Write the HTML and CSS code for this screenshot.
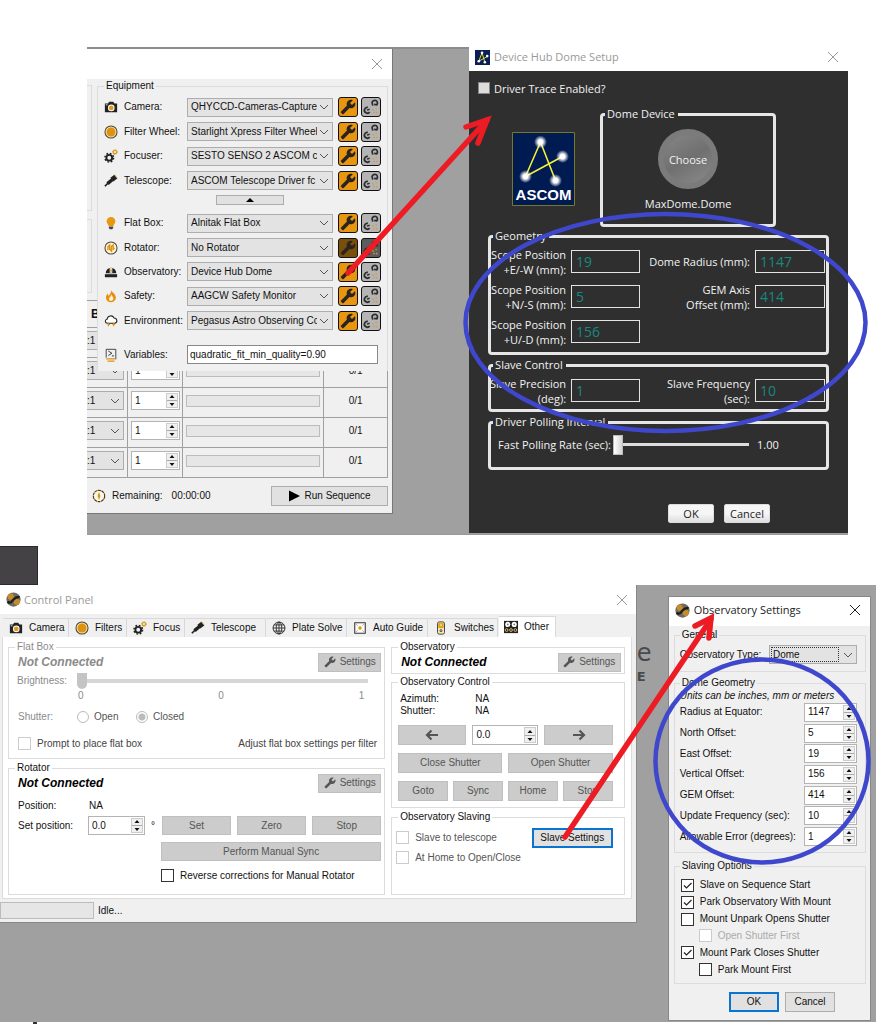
FILE: index.html
```html
<!DOCTYPE html>
<html lang="en">
<head>
<meta charset="utf-8">
<title>Observatory setup</title>
<link rel="stylesheet" href="styles.css">
</head>
<body>
<svg class="sprite" aria-hidden="true">
  <symbol id="i-wrench" viewBox="0 0 24 24"><path transform="translate(24 0) scale(-1 1)" d="M22.7 19l-9.1-9.1c.9-2.3.4-5-1.5-6.9-2-2-5-2.4-7.4-1.3L9 6 6 9 1.6 4.7C.4 7.1.9 10.1 2.9 12.1c1.9 1.9 4.6 2.4 6.9 1.5l9.1 9.1c.4.4 1 .4 1.4 0l2.3-2.3c.5-.4.5-1.1.1-1.4z"/></symbol>
  <symbol id="i-link" viewBox="0 0 20 20"><g fill="none" stroke="#2b2b2b" stroke-width="1.900"><path d="M6.500 10.500A3.200 3.200 0 1 0 8.500 15.500"/><path d="M12 8.500L11.200 5.200A3 3 0 1 1 16.500 7.500L13.500 7"/><path d="M5.500 13.500l3-1" stroke-width="1.500"/></g><path d="M11.500 12.500l1.500 1.500M15.500 11l.5 1.500M12.500 16.500l1.500-.5M15.500 15.500l1.500 1.500" stroke="#d69a3c" stroke-width="1.300"/></symbol>
  <symbol id="i-camera" viewBox="0 0 16 16"><path d="M1 4h3.500l1.500-2h4.500l1.500 2H15v10H1z" fill="#222"/><circle cx="8.300" cy="9" r="3.800" fill="#fff"/><circle cx="8.300" cy="9" r="2.700" fill="#e09a1a"/><path d="M2 5.500h2" stroke="#fff"/></symbol>
  <symbol id="i-disc" viewBox="0 0 16 16"><circle cx="8" cy="8" r="6.900" fill="#f7dfb0" stroke="#4c4636" stroke-width="1.200"/><circle cx="8" cy="8" r="5.100" fill="#dd930f"/></symbol>
  <symbol id="i-gears" viewBox="0 0 16 16"><circle cx="6" cy="10" r="3.300" fill="none" stroke="#222" stroke-width="2.200"/><circle cx="6" cy="10" r="5" fill="none" stroke="#222" stroke-width="1.600" stroke-dasharray="2 1.930"/><circle cx="12.500" cy="3.500" r="1.900" fill="none" stroke="#dd930f" stroke-width="1.200"/><circle cx="12.500" cy="3.500" r="2.800" fill="none" stroke="#dd930f" stroke-dasharray="1.200 1"/></symbol>
  <symbol id="i-scope" viewBox="0 0 16 16"><path d="M1 14l4-4" stroke="#222" stroke-width="2"/><path d="M4 11l6-5" stroke="#222" stroke-width="4"/><path d="M9 6.500L13.500 3" stroke="#222" stroke-width="5.500"/><path d="M12 .8l3 4" stroke="#dd930f" stroke-width="1"/></symbol>
  <symbol id="i-bulb" viewBox="0 0 16 16"><path d="M8 1a5 5 0 0 0-5 5c0 2 1.500 3 2.300 5.300h5.400C11.500 9 13 8 13 6a5 5 0 0 0-5-5z" fill="#e8980e"/><path d="M5.500 12h5v1.500L9.500 15h-3l-1-1.500z" fill="#444"/></symbol>
  <symbol id="i-rot" viewBox="0 0 16 16"><circle cx="8" cy="8" r="6.900" fill="#fff4dd" stroke="#4c4636" stroke-width="1.200"/><path d="M4.500 10.500V6.500l2-2v5l2 2V6l2-1.500v5l1.500-1.500" fill="none" stroke="#dd930f" stroke-width="1.600"/></symbol>
  <symbol id="i-dome" viewBox="0 0 16 16"><path d="M2 9.500a6 6.500 0 0 1 12 0z" fill="#222"/><path d="M6.500 3.500h3V9h-3z" fill="#e8e0d0"/><circle cx="8" cy="6.500" r="1" fill="#dd930f"/><path d="M1 10.500h14V14H1z" fill="#222"/></symbol>
  <symbol id="i-fire" viewBox="0 0 16 16"><path d="M8 .8c.5 3 4.500 3.500 5.500 8 .5 3.500-2 6.200-5.500 6.200S2 12.500 2.300 9c.2-2 1.200-2.800 1.700-4 1 1 1 2 1 3C7 6 8.500 4 8 .8z" fill="#e8900e"/><path d="M8.500 6c0 2 2.700 3 2.200 5.500-.3 1.500-1.500 2-2.700 2s-2.500-.8-2.300-2.500C6 9.500 8 9 8.500 6z" fill="#fff1d8"/></symbol>
  <symbol id="i-cloud" viewBox="0 0 16 16"><path d="M4 10.500C1 10.500.5 6.500 3.500 6 4 2 9.500.5 11.500 4.500c3.500 0 4.500 5 1 6z" fill="#fff" stroke="#222" stroke-width="1.200"/><path d="M5 10v4M11 10v4M4 12h3M9.500 12h3" stroke="#dd930f" stroke-width="1.300"/></symbol>
  <symbol id="i-script" viewBox="0 0 16 16"><path d="M2.500 11V1.500h11V13" fill="none" stroke="#333"/><path d="M5 3.500l4 2.500-4 2.500M9 9h2.500" fill="none" stroke="#222"/><path d="M2.500 12.500h10M4 15h8" stroke="#dd930f" stroke-width="1.400"/></symbol>
  <symbol id="i-clock" viewBox="0 0 16 16"><circle cx="8" cy="8" r="6.500" fill="#fff7e6" stroke="#4c3b20" stroke-width="1.300" stroke-dasharray="3.500 .6"/><path d="M8 3.500l1.600 4.500L8 12.500 6.400 8z" fill="#dd930f"/></symbol>
  <symbol id="i-globe" viewBox="0 0 16 16"><g fill="none" stroke="#333" stroke-width="1.100"><circle cx="8" cy="8" r="6.800"/><ellipse cx="8" cy="8" rx="3.200" ry="6.800"/><path d="M8 1v14M1 8h14M2.200 4.500h11.600M2.200 11.500h11.600"/></g></symbol>
  <symbol id="i-guide" viewBox="0 0 16 16"><path d="M2 2h12v12H2z" fill="#fffdf5" stroke="#333" stroke-width="1.200"/><path d="M4 4l1 1M12 4l-1 1M4 12l1-1M12 12l-1-1" stroke="#555"/><circle cx="8" cy="8" r="1.900" fill="#dd930f"/></symbol>
  <symbol id="i-switch" viewBox="0 0 16 16"><rect x="4" y="1" width="8" height="14" rx="2" fill="#f7e6b8" stroke="#333"/><path d="M5 2h6v6H5z" fill="#e0a010"/><path d="M8 3v3" stroke="#fff"/><circle cx="8" cy="11" r="1.200" fill="none" stroke="#333"/></symbol>
  <symbol id="i-other" viewBox="0 0 16 16"><path d="M0 1h16v14H0z" fill="#222"/><circle cx="4.300" cy="5" r="2.900" fill="#fff"/><circle cx="11.700" cy="5" r="2.900" fill="#fff"/><circle cx="4.300" cy="5" r="1" fill="#777"/><circle cx="11.700" cy="5" r="1" fill="#777"/><g fill="#222" stroke="#e9c876"><circle cx="3" cy="11.500" r="1.600"/><circle cx="8" cy="11.500" r="1.600"/><circle cx="13" cy="11.500" r="1.600"/></g></symbol>
  <symbol id="i-sgp" viewBox="0 0 16 16"><circle cx="8" cy="8" r="7.600" fill="#6e6a63"/><circle cx="5" cy="5" r="3.300" fill="#c58c28"/><circle cx="11.500" cy="10.500" r="3.300" fill="#c58c28"/><path d="M1.500 10.500c4 2.500 4.500-.5 6.500-2.500s4-3 6.500-2.500" fill="none" stroke="#1d1d1d" stroke-width="2.600"/></symbol>
  <symbol id="i-x" viewBox="0 0 12 12"><path d="M1 1l10 10M11 1L1 11" fill="none" stroke="currentColor"/></symbol>
  <symbol id="i-left" viewBox="0 0 14 12"><path d="M13 6H2M6.500 1.500L2 6l4.500 4.500" fill="none" stroke="currentColor" stroke-width="2.200"/></symbol>
  <symbol id="i-right" viewBox="0 0 14 12"><path d="M1 6h11M7.500 1.500L12 6l-4.500 4.500" fill="none" stroke="currentColor" stroke-width="2.200"/></symbol>
</svg>

<main class="page">
  <section class="shot shot-top">
    <div class="win seq">
      <div class="titlebar seq-title"><button class="close" aria-label="Close"><svg><use href="#i-x"/></svg></button></div>
      <div class="seq-body">
        <div class="behind"><i class="stub stub-a"></i><i class="stub stub-b"></i></div>
        <table class="events">
          <thead><tr><th>B</th><th></th><th></th><th></th></tr></thead>
          <tbody>
            <tr><td><select class="bin" aria-label="Binning"><option>:1</option></select></td><td><span class="spin"><input value="1" aria-label="Repeat"><i></i></span></td><td><div class="bar"></div></td><td>0/1</td></tr>
            <tr><td><select class="bin" aria-label="Binning"><option>:1</option></select></td><td><span class="spin"><input value="1" aria-label="Repeat"><i></i></span></td><td><div class="bar"></div></td><td>0/1</td></tr>
            <tr><td><select class="bin" aria-label="Binning"><option>:1</option></select></td><td><span class="spin"><input value="1" aria-label="Repeat"><i></i></span></td><td><div class="bar"></div></td><td>0/1</td></tr>
            <tr><td><select class="bin" aria-label="Binning"><option>:1</option></select></td><td><span class="spin"><input value="1" aria-label="Repeat"><i></i></span></td><td><div class="bar"></div></td><td>0/1</td></tr>
            <tr><td><select class="bin" aria-label="Binning"><option>:1</option></select></td><td><span class="spin"><input value="1" aria-label="Repeat"><i></i></span></td><td><div class="bar"></div></td><td>0/1</td></tr>
          </tbody>
        </table>
        <div class="seq-foot"><svg class="ic"><use href="#i-clock"/></svg><span class="remain">Remaining:</span><span>00:00:00</span><button class="btn run"><svg viewBox="0 0 10 10"><path d="M0 0l10 5-10 5z"/></svg>Run Sequence</button></div>

        <div class="equip">
          <fieldset>
            <legend>Equipment</legend>
            <div class="devs devs-main">
              <div class="dev"><svg class="ic"><use href="#i-camera"/></svg><label for="d1">Camera:</label><select id="d1"><option>QHYCCD-Cameras-Capture</option></select><button class="sq" aria-label="Settings"><svg><use href="#i-wrench"/></svg></button><button class="sq link" aria-label="Connect"><svg><use href="#i-link"/></svg></button></div>
              <div class="dev"><svg class="ic"><use href="#i-disc"/></svg><label for="d2">Filter Wheel:</label><select id="d2"><option>Starlight Xpress Filter Wheel</option></select><button class="sq" aria-label="Settings"><svg><use href="#i-wrench"/></svg></button><button class="sq link" aria-label="Connect"><svg><use href="#i-link"/></svg></button></div>
              <div class="dev"><svg class="ic"><use href="#i-gears"/></svg><label for="d3">Focuser:</label><select id="d3"><option>SESTO SENSO 2 ASCOM c</option></select><button class="sq" aria-label="Settings"><svg><use href="#i-wrench"/></svg></button><button class="sq link" aria-label="Connect"><svg><use href="#i-link"/></svg></button></div>
              <div class="dev"><svg class="ic"><use href="#i-scope"/></svg><label for="d4">Telescope:</label><select id="d4"><option>ASCOM Telescope Driver fc</option></select><button class="sq" aria-label="Settings"><svg><use href="#i-wrench"/></svg></button><button class="sq link" aria-label="Connect"><svg><use href="#i-link"/></svg></button></div>
            </div>
            <button class="btn fold" aria-label="Collapse"><svg viewBox="0 0 8 4"><path d="M0 4l4-4 4 4z"/></svg></button>
            <div class="devs devs-more">
              <div class="dev"><svg class="ic"><use href="#i-bulb"/></svg><label for="d5">Flat Box:</label><select id="d5"><option>Alnitak Flat Box</option></select><button class="sq" aria-label="Settings"><svg><use href="#i-wrench"/></svg></button><button class="sq link" aria-label="Connect"><svg><use href="#i-link"/></svg></button></div>
              <div class="dev off"><svg class="ic"><use href="#i-rot"/></svg><label for="d6">Rotator:</label><select id="d6"><option>No Rotator</option></select><button class="sq" aria-label="Settings"><svg><use href="#i-wrench"/></svg></button><button class="sq link" aria-label="Connect"><svg><use href="#i-link"/></svg></button></div>
              <div class="dev"><svg class="ic"><use href="#i-dome"/></svg><label for="d7">Observatory:</label><select id="d7"><option>Device Hub Dome</option></select><button class="sq" aria-label="Settings"><svg><use href="#i-wrench"/></svg></button><button class="sq link" aria-label="Connect"><svg><use href="#i-link"/></svg></button></div>
              <div class="dev"><svg class="ic"><use href="#i-fire"/></svg><label for="d8">Safety:</label><select id="d8"><option>AAGCW Safety Monitor</option></select><button class="sq" aria-label="Settings"><svg><use href="#i-wrench"/></svg></button><button class="sq link" aria-label="Connect"><svg><use href="#i-link"/></svg></button></div>
              <div class="dev"><svg class="ic"><use href="#i-cloud"/></svg><label for="d9">Environment:</label><select id="d9"><option>Pegasus Astro Observing Cc</option></select><button class="sq" aria-label="Settings"><svg><use href="#i-wrench"/></svg></button><button class="sq link" aria-label="Connect"><svg><use href="#i-link"/></svg></button></div>
            </div>
            <div class="dev vars"><svg class="ic"><use href="#i-script"/></svg><label for="vars">Variables:</label><input id="vars" value="quadratic_fit_min_quality=0.90"></div>
          </fieldset>
        </div>
      </div>
    </div>

    <div class="hub">
      <div class="titlebar hub-title"><svg class="hub-ic" viewBox="0 0 16 16"><path fill="#0a1f55" d="M0 0h16v16H0z"/><path d="M4 12l3.500-9 3 10M4 12l9-5" fill="none" stroke="#e6e23c"/><g fill="#fff"><circle cx="4" cy="12" r="1.400"/><circle cx="7.500" cy="3" r="1.400"/><circle cx="10.500" cy="13" r="1.400"/><circle cx="13" cy="6.500" r="1.400"/></g></svg><span>Device Hub Dome Setup</span><button class="close" aria-label="Close"><svg><use href="#i-x"/></svg></button></div>
      <div class="hub-body">
        <label class="trace"><input type="checkbox">Driver Trace Enabled?</label>
        <div class="hub-top">
          <svg class="ascom" viewBox="0 0 63 74"><defs><radialGradient id="glow"><stop offset=".35" stop-color="#fff"/><stop offset="1" stop-color="#fff" stop-opacity="0"/></radialGradient></defs><path d="M.5.5h62v73H.500z" fill="#001a52" stroke="#77782a"/><path d="M13.500 44.500L28.500 10l15 38.500M13.500 44.500L50.500 24.500" fill="none" stroke="#f4ef3a" stroke-width="1.600"/><g fill="url(#glow)"><circle cx="28.500" cy="10" r="6.500"/><circle cx="50.500" cy="24.500" r="6.500"/><circle cx="13.500" cy="44.500" r="6.500"/><circle cx="43.500" cy="48.500" r="6.500"/></g><text x="31.500" y="68" text-anchor="middle">ASCOM</text></svg>
          <fieldset class="wg device"><legend>Dome Device</legend><button class="choose">Choose</button><div>MaxDome.Dome</div></fieldset>
        </div>
        <fieldset class="wg geo"><legend>Geometry</legend>
          <div class="pair"><label for="g1">Scope Position<br>+E/-W (mm):</label><input id="g1" value="19"><label for="g2">Dome Radius (mm):</label><input id="g2" value="1147"></div>
          <div class="pair"><label for="g3">Scope Position<br>+N/-S (mm):</label><input id="g3" value="5"><label for="g4">GEM Axis<br>Offset (mm):</label><input id="g4" value="414"></div>
          <div class="pair"><label for="g5">Scope Position<br>+U/-D (mm):</label><input id="g5" value="156"></div>
        </fieldset>
        <fieldset class="wg slavec"><legend>Slave Control</legend>
          <div class="pair"><label for="g6">Slave Precision<br>(deg):</label><input id="g6" value="1"><label for="g7">Slave Frequency<br>(sec):</label><input id="g7" value="10"></div>
        </fieldset>
        <fieldset class="wg poll"><legend>Driver Polling Interval</legend>
          <div class="rate"><label for="rate">Fast Polling Rate (sec):</label><input type="range" id="rate" min="0" max="10" value="0"><span>1.00</span></div>
        </fieldset>
        <div class="hub-actions"><button>OK</button><button>Cancel</button></div>
      </div>
    </div>
  </section>

  <div class="swatch"></div>

  <section class="shot shot-bottom">
    <div class="win panel">
      <div class="titlebar cp-title"><svg class="app"><use href="#i-sgp"/></svg><span>Control Panel</span><button class="close" aria-label="Close"><svg><use href="#i-x"/></svg></button></div>
      <nav class="tabs">
        <button class="t1"><svg class="ic"><use href="#i-camera"/></svg>Camera</button>
        <button class="t2"><svg class="ic"><use href="#i-disc"/></svg>Filters</button>
        <button class="t2"><svg class="ic"><use href="#i-gears"/></svg>Focus</button>
        <button class="t3"><svg class="ic"><use href="#i-scope"/></svg>Telescope</button>
        <button class="t3"><svg class="ic"><use href="#i-globe"/></svg>Plate Solve</button>
        <button class="t3"><svg class="ic"><use href="#i-guide"/></svg>Auto Guide</button>
        <button class="t-sw"><svg class="ic"><use href="#i-switch"/></svg>Switches</button>
        <button class="t2 on"><svg class="ic"><use href="#i-other"/></svg>Other</button>
      </nav>
      <div class="tabpage">
        <div class="col">
          <fieldset class="flat"><legend>Flat Box</legend>
            <div class="head"><strong>Not Connected</strong><button class="btn dis set"><svg><use href="#i-wrench"/></svg>Settings</button></div>
            <div class="bright"><label for="br">Brightness:</label><input type="range" id="br" min="0" max="1" value="0" disabled></div>
            <div class="ticks"><span>0</span><span>0</span><span>1</span></div>
            <div class="shutter"><span>Shutter:</span><label><input type="radio" name="sh" disabled>Open</label><label><input type="radio" name="sh" checked disabled>Closed</label></div>
            <div class="prompt"><label class="ck"><input type="checkbox" disabled>Prompt to place flat box</label><span>Adjust flat box settings per filter</span></div>
          </fieldset>
          <fieldset class="rot"><legend>Rotator</legend>
            <div class="head"><strong>Not Connected</strong><button class="btn dis set"><svg><use href="#i-wrench"/></svg>Settings</button></div>
            <div class="pos"><span>Position:</span><span>NA</span></div>
            <div class="setpos"><label for="sp">Set position:</label><span class="spin"><input id="sp" value="0.0"><i></i></span><span class="deg">°</span><button class="btn dis">Set</button><button class="btn dis">Zero</button><button class="btn dis">Stop</button></div>
            <div class="under"><button class="btn dis">Perform Manual Sync</button><label class="ck"><input type="checkbox">Reverse corrections for Manual Rotator</label></div>
          </fieldset>
        </div>
        <div class="col">
          <fieldset class="obs"><legend>Observatory</legend>
            <div class="head"><strong>Not Connected</strong><button class="btn dis set"><svg><use href="#i-wrench"/></svg>Settings</button></div>
          </fieldset>
          <fieldset class="ctl"><legend>Observatory Control</legend>
            <div class="stat"><span>Azimuth:</span><span>NA</span><span>Shutter:</span><span>NA</span></div>
            <div class="moves">
              <div class="three"><button class="btn dis" aria-label="Left"><svg><use href="#i-left"/></svg></button><span class="spin"><input value="0.0" aria-label="Step"><i></i></span><button class="btn dis" aria-label="Right"><svg><use href="#i-right"/></svg></button></div>
              <div class="two"><button class="btn dis">Close Shutter</button><button class="btn dis">Open Shutter</button></div>
              <div class="four"><button class="btn dis">Goto</button><button class="btn dis">Sync</button><button class="btn dis">Home</button><button class="btn dis">Stop</button></div>
            </div>
          </fieldset>
          <fieldset class="slaving"><legend>Observatory Slaving</legend>
            <div class="slaving-row">
              <div class="checks"><label class="ck"><input type="checkbox" disabled>Slave to telescope</label><label class="ck"><input type="checkbox" disabled>At Home to Open/Close</label></div>
              <button class="btn focus">Slave Settings</button>
            </div>
          </fieldset>
        </div>
      </div>
      <div class="status"><div class="bar"></div><span>Idle...</span></div>
    </div>

    <div class="wall"><span class="w1">e</span><span class="w2">E</span></div>

    <div class="win dlg">
      <div class="titlebar dlg-title"><svg class="app"><use href="#i-sgp"/></svg><span>Observatory Settings</span><button class="close" aria-label="Close"><svg><use href="#i-x"/></svg></button></div>
      <div class="dlg-body">
        <fieldset class="general"><legend>General</legend><div class="type"><label for="ot">Observatory Type:</label><span class="pick"><select id="ot"><option>Dome</option></select></span></div></fieldset>
        <fieldset class="dgeo"><legend>Dome Geometry</legend>
          <em>Units can be inches, mm or meters</em>
          <div class="nums">
            <div><label for="n1">Radius at Equator:</label><span class="spin"><input id="n1" value="1147"><i></i></span></div>
            <div><label for="n2">North Offset:</label><span class="spin"><input id="n2" value="5"><i></i></span></div>
            <div><label for="n3">East Offset:</label><span class="spin"><input id="n3" value="19"><i></i></span></div>
            <div><label for="n4">Vertical Offset:</label><span class="spin"><input id="n4" value="156"><i></i></span></div>
            <div><label for="n5">GEM Offset:</label><span class="spin"><input id="n5" value="414"><i></i></span></div>
            <div><label for="n6">Update Frequency (sec):</label><span class="spin"><input id="n6" value="10"><i></i></span></div>
            <div><label for="n7">Allowable Error (degrees):</label><span class="spin"><input id="n7" value="1"><i></i></span></div>
          </div>
        </fieldset>
        <fieldset class="sopt"><legend>Slaving Options</legend>
          <div class="opts">
            <label class="ck"><input type="checkbox" checked>Slave on Sequence Start</label>
            <label class="ck"><input type="checkbox" checked>Park Observatory With Mount</label>
            <label class="ck"><input type="checkbox">Mount Unpark Opens Shutter</label>
            <label class="ck sub"><input type="checkbox" disabled>Open Shutter First</label>
            <label class="ck"><input type="checkbox" checked>Mount Park Closes Shutter</label>
            <label class="ck sub"><input type="checkbox">Park Mount First</label>
          </div>
        </fieldset>
        <div class="dlg-actions"><button class="btn focus">OK</button><button class="btn">Cancel</button></div>
      </div>
    </div>
  </section>
  <div class="edge"></div>

  <svg class="marks" viewBox="0 0 876 1024" aria-hidden="true">
    <g fill="none" stroke="#3f48cc" stroke-width="4.500"><ellipse cx="665.500" cy="322.500" rx="200" ry="108.500"/><ellipse cx="762" cy="761" rx="106.500" ry="101.500"/></g>
    <g fill="none" stroke="#ed1c24" stroke-width="5.500" stroke-linecap="round"><path d="M348 273L487 120"/><path d="M466 127L487 120L478 143"/><path d="M565 837L711 619"/><path d="M695 626L711 618L709 638"/></g>
  </svg>
</main>
</body>
</html>
```
FILE: styles.css
```css
:root {
  --ui: "Liberation Sans", Arial, sans-serif;
  --seg: "Open Sans", sans-serif;
  --chev: url("data:image/svg+xml,%3Csvg xmlns='http://www.w3.org/2000/svg' width='10' height='6'%3E%3Cpath d='M1 1l4 4 4-4' fill='none' stroke='%23555'/%3E%3C/svg%3E");
  --tick: url("data:image/svg+xml,%3Csvg xmlns='http://www.w3.org/2000/svg' width='11' height='11'%3E%3Cpath d='M2 5.500l2.500 2.500L9.500 3' fill='none' stroke='%23222' stroke-width='1.200'/%3E%3C/svg%3E");
  --arrows: url("data:image/svg+xml,%3Csvg xmlns='http://www.w3.org/2000/svg' width='12' height='15'%3E%3Cpath d='M3.500 5L6 2l2.500 3zM3.500 10h5L6 13z' fill='%23111'/%3E%3Cpath d='M0 7.500h12' stroke='%23aaa'/%3E%3C/svg%3E");
}
* { box-sizing: border-box; }
body { margin: 0; background: #fff; color: #111; font: 10px/12px var(--ui); }
button, input, select { font: inherit; color: inherit; margin: 0; padding: 0; border-radius: 0; min-width: 0; }
select { appearance: none; height: 19px; border: 1px solid #adadad; background: #e3e3e3 var(--chev) no-repeat right 3px center; padding: 0 15px 0 3px; overflow: hidden; white-space: nowrap; text-overflow: clip; }
fieldset { margin: 0; padding: 0; border: 1px solid #dcdcdc; min-width: 0; }
legend { padding: 0 2px; margin-left: 6px; line-height: 12px; }
.sprite { position: absolute; width: 0; height: 0; }
.page { position: relative; padding-top: 47px; }
.marks { position: absolute; left: 0; top: 0; width: 876px; height: 1024px; pointer-events: none; }
.ic { width: 14px; height: 14px; flex: none; }
.titlebar { display: flex; align-items: center; background: #fff; font: 11px/16px var(--seg); color: #999; }
.close { margin-left: auto; border: 0; background: none; color: #999; display: flex; }
.close svg { width: 12px; height: 12px; }
.btn { border: 1px solid #adadad; background: #e1e1e1; display: flex; align-items: center; justify-content: center; white-space: nowrap; }
.btn.dis { background: #ccc; border-color: #bfbfbf; color: #555; }
.btn.focus { border: 2px solid #0a74d0; }
.spin { display: flex; height: 19px; border: 1px solid #b4b4b4; background: #fff; padding: 1px; }
.spin input { flex: 1; width: 0; border: 0; padding-left: 2px; background: none; }
.spin i { flex: none; width: 12px; background: #f0f0f0 var(--arrows) no-repeat center; outline: 1px solid #ccc; outline-offset: -1px; }
.bar { border: 1px solid #bcbcbc; background: #e6e6e6; }
.ck { display: flex; align-items: center; gap: 6px; white-space: nowrap; }
.ck input { appearance: none; flex: none; width: 13px; height: 13px; border: 1px solid #333; background: #fff; }
.ck input:checked { background: #fff var(--tick) no-repeat center; }
.ck input:disabled { border-color: #ccc; }

/* sequence window and dome setup dialog */
.shot { display: flex; background: #a0a0a0; }
.shot-top { margin: 0 28px 0 87px; padding-top: 2px; border-bottom: 1px solid #999; min-height: 488px; background: linear-gradient(#8c8c8c 2px, #a0a0a0 2px); }
.seq { flex: 306 1 0; margin-right: 76px; align-self: flex-start; border-right: 1px solid #777; border-bottom: 1px solid #777; background: #f0f0f0; min-width: 0; }
.seq-title { height: 30px; padding-right: 9px; }
.seq-body { position: relative; padding-right: 4px; }
.behind { height: 221px; padding-top: 6px; }
.stub { display: block; width: 5px; border: 1px solid #dcdcdc; border-left: 0; }
.stub-a { height: 126px; margin-bottom: 8px; }
.stub-b { height: 74px; }
.events { width: 100%; border-collapse: separate; border-spacing: 0; table-layout: fixed; border-top: 1px solid #a0a0a0; }
.events th { height: 27px; border-bottom: 1px solid #a0a0a0; text-align: left; padding-left: 4px; font: bold 12px/12px var(--ui); }
.events th:nth-child(1) { width: 41px; }
.events th:nth-child(2) { width: 55px; }
.events th:nth-child(4) { width: 64px; }
.events td { height: 30px; padding: 0 3px 4px; border-right: 1px solid #a0a0a0; border-bottom: 1px solid #a0a0a0; text-align: center; vertical-align: middle; }
.events td:first-child { padding-left: 0; }
.events .bin { display: block; width: 100%; border-left: 0; padding-left: 0; }
.events .spin { text-align: left; width: 49px; }
.events .bar { height: 12px; }
.seq-foot { display: flex; align-items: center; height: 35px; padding-left: 5px; }
.remain { margin: 0 9px 0 6px; }
.run { margin-left: auto; width: 117px; height: 20px; gap: 5px; }
.run svg { width: 11px; height: 12px; }
.equip { position: absolute; left: 10px; right: 2px; top: 0; height: 292px; background: #f0f0f0; overflow: hidden; }
.equip fieldset { margin-right: 2px; padding: 0 6px 10px; }
.equip legend { margin-left: 0; line-height: 14px; }
.devs { display: grid; grid-template-columns: minmax(0, 1fr); grid-auto-rows: 1fr; align-items: center; }
.devs-main { min-height: 98px; margin-top: 2px; }
.devs-more { min-height: 122px; margin-top: 6px; }
.dev { display: flex; align-items: center; }
.dev label { width: 63px; margin-left: 6px; flex: none; }
.dev select { flex: 1; width: 0; margin-right: 5px; }
.dev input { flex: 1; width: 0; height: 19px; border: 1px solid #888; background: #fff; padding-left: 2px; margin-right: 3px; }
.vars { margin-top: 12px; }
.sq { width: 20px; height: 20px; border: 1px solid #111; border-radius: 3px; background: #e8960f; display: flex; align-items: center; justify-content: center; flex: none; }
.sq svg { width: 16px; height: 16px; fill: #2a2420; }
.sq.link { background: #b4b4b4; margin-left: 3px; }
.sq.link svg { width: 18px; height: 18px; }
.off .sq { background: #7a4f0a; }
.off .sq.link { background: #5c5c5c; }
.fold { width: 68px; height: 10px; margin: 2px auto 0 112px; }
.fold svg { width: 8px; height: 4px; }

.hub { flex: 380 1 0; min-width: 0; margin-top: -2px; margin-bottom: 1px; display: flex; flex-direction: column; font: 11px/15px var(--seg); color: #f2f2f2; }
.hub-title { height: 24px; padding: 0 9px 4px 6px; gap: 4px; }
.hub-ic { width: 15px; height: 15px; }
.hub-body { flex: 1; background: #2f2f2f; padding: 9px 19px 0; }
.trace { display: flex; align-items: center; gap: 4px; height: 16px; margin-left: -10px; }
.trace input { appearance: none; width: 12px; height: 12px; border: 1px solid #888; background: #ddd; }
.hub-top { display: flex; margin-top: 10px; }
.ascom { width: 63px; height: 74px; margin: 26px 25px 0 24px; }
.ascom text { font: bold 15px "Liberation Sans", sans-serif; fill: #fff; }
.wg { border: 3px solid #e6e6e6; border-radius: 4px; background: none; }
.wg legend { line-height: 16px; margin-left: 2px; padding: 0 3px 0 2px; }
.device { width: 176px; height: 121px; text-align: center; }
.device legend { text-align: left; }
.choose { display: block; width: 60px; height: 60px; margin: 7px auto; border: 6px solid #7b7b7b; border-radius: 50%; background: linear-gradient(150deg, #868686, #707070 50%, #8a8a8a); white-space: nowrap; padding: 0; line-height: 15px; }
.geo { margin-top: 1px; padding: 0 0 3px; }
.pair { display: grid; grid-template-columns: 75px 69px 1fr 70px; column-gap: 5px; align-items: center; height: 35px; margin-right: 1px; }
.pair label { text-align: right; white-space: nowrap; justify-self: end; }
.pair input { width: 100%; height: 23px; border: 1px solid #e4e4e4; background: none; color: #17897f; font-size: 14px; padding-left: 4px; }
.slavec { margin-top: 2px; padding-bottom: 1px; }
.wg.poll { margin-top: 2px; padding: 0 0 9px 7px; }
.poll legend { margin-left: -5px; }
.rate { display: flex; align-items: center; gap: 2px; height: 27px; margin-top: 1px; }
.rate span { margin-left: 6px; }
.rate input { appearance: none; width: 136px; height: 20px; background: linear-gradient(#ddd, #ddd) no-repeat center / 100% 3px; }
.rate input::-webkit-slider-thumb { appearance: none; width: 10px; height: 20px; background: linear-gradient(90deg, #fff, #d4d4d4); border: 1px solid #bbb; }
.hub-actions { display: flex; justify-content: flex-end; gap: 10px; margin: 34px 59px 0 0; }
.hub-actions button { width: 46px; height: 19px; border: 1px solid #ddd; border-radius: 2px; background: linear-gradient(#f6f6f6 50%, #dedede); color: #222; line-height: 16px; }

.swatch { width: 38px; height: 39px; margin-top: 11px; background: #454246; border: 1px solid #2d2a2d; border-left: 0; }

/* control panel and observatory settings */
.shot-bottom { padding-right: 5px; min-height: 437px; }
.panel { flex: 638 1 0; min-width: 0; align-self: flex-start; background: #f0f0f0; border-right: 1px solid #888; border-bottom: 1px solid #888; }
.app { width: 15px; height: 15px; flex: none; }
.cp-title { height: 29px; padding: 0 8px 0 6px; gap: 3px; }
.tabs { display: flex; align-items: flex-end; padding: 3px 0 0 3px; height: 23px; }
.tabs button { flex: none; display: flex; align-items: center; gap: 6px; height: 19px; padding: 0 0 0 5px; border: 1px solid #d9d9d9; border-left-color: #f0f0f0; border-bottom: 0; background: #f0f0f0; white-space: nowrap; }
.tabs .t1 { width: 66px; }
.tabs .t2 { width: 58px; }
.tabs .t3 { width: 81px; }
.tabs .t-sw { width: 70px; }
.tabs .on { background: #fff; height: 21px; }
.tabpage { margin: 0 4px 0 2px; background: #fff; border: 1px solid #dcdcdc; border-top: 0; padding: 4px 6px 3px 5px; display: grid; grid-template-columns: minmax(0, 378fr) minmax(0, 234fr); column-gap: 6px; }
.head { display: flex; align-items: center; justify-content: space-between; height: 18px; padding: 0 3px 0 9px; }
.head strong { font: italic bold 12px/14px var(--ui); color: #000; }
.set { width: 63px; height: 19px; gap: 4px; }
.set svg { width: 12px; height: 12px; fill: #555; }
.flat { height: 118px; color: #8a8a8a; }
.flat strong { color: #8a8a8a; }
.bright { display: flex; align-items: center; height: 19px; padding: 0 16px 0 8px; }
.bright label { width: 60px; }
.bright input { flex: 1; width: 0; appearance: none; height: 17px; background: linear-gradient(#d6d6d6, #d6d6d6) no-repeat center / 100% 4px; }
.bright input::-webkit-slider-thumb { appearance: none; width: 10px; height: 16px; background: #c4c4c4; border-radius: 0 0 5px 5px; }
.ticks { display: flex; justify-content: space-between; padding: 0 20px 0 69px; }
.shutter { display: flex; align-items: center; height: 16px; margin-top: 7px; padding-left: 9px; color: #555; }
.shutter span { width: 59px; color: #8a8a8a; }
.shutter label { display: flex; align-items: center; gap: 5px; width: 59px; }
.shutter input { appearance: none; width: 12px; height: 12px; border: 1px solid #bbb; border-radius: 50%; }
.shutter input:checked { background: radial-gradient(#bbb 3px, #fff 4px); }
.prompt { display: flex; justify-content: space-between; align-items: center; margin-top: 12px; padding: 0 7px 0 9px; color: #444; }
.rot { height: 133px; margin-top: 3px; }
.pos { display: grid; grid-template-columns: 71px 1fr; padding-left: 9px; margin-top: 8px; }
.setpos { display: grid; grid-template-columns: 64px 57px 5px 1fr 1fr 1fr; column-gap: 6px; align-items: center; margin: 4px 3px 0 9px; }
.setpos .btn, .under .btn { height: 19px; }
.under { margin: 7px 3px 0 152px; display: grid; gap: 8px; }
.obs { height: 33px; }
.ctl { height: 132px; margin-top: 2px; }
.stat { display: grid; grid-template-columns: 75px 1fr; padding-left: 8px; margin-top: 5px; }
.moves { display: grid; gap: 8px; margin: 8px 11px 0 6px; }
.moves .btn, .moves .spin { height: 20px; }
.moves svg { width: 14px; height: 12px; }
.three { display: grid; grid-template-columns: 1fr 66px 1fr; column-gap: 6px; }
.two { display: grid; grid-template-columns: 1fr 1fr; column-gap: 6px; }
.four { display: grid; grid-template-columns: 1fr 1fr 1fr 1fr; column-gap: 5px; }
.slaving { height: 84px; margin-top: 3px; }
.slaving-row { display: flex; justify-content: space-between; align-items: flex-start; padding: 5px 11px 0 4px; }
.checks { display: grid; gap: 7px; padding-top: 3px; color: #555; }
.slaving .btn { width: 81px; height: 20px; }
.status { display: flex; align-items: center; gap: 4px; height: 23px; }
.status .bar { width: 94px; height: 17px; }

.wall { width: 31px; flex: none; padding-top: 56px; color: #4a4a4a; font-family: "DejaVu Sans", sans-serif; }
.wall span { display: block; }
.w1 { font-size: 24px; line-height: 25px; }
.w2 { font-size: 13px; line-height: 22px; font-weight: bold; }

.dlg { flex: 202 1 0; min-width: 0; margin-top: 11px; align-self: flex-start; background: #f0f0f0; border: 1px solid #888; }
.dlg-title { height: 29px; padding: 0 9px 3px 6px; gap: 4px; color: #222; }
.dlg-title .close { color: #222; }
.dlg-body { padding: 3px 4px 8px 5px; }
.dlg fieldset { padding: 0 8px 0 5px; }
.dlg legend { margin-left: 0; }
.general { height: 43px; }
.type { display: flex; align-items: center; justify-content: space-between; padding-top: 4px; }
.pick { position: relative; display: flex; width: 88px; }
.pick select { width: 100%; }
.pick::after { content: ""; position: absolute; left: 2px; top: 2px; bottom: 2px; right: 18px; border: 1px dotted #333; pointer-events: none; }
.dgeo { height: 176px; margin-top: 5px; }
.dgeo em { display: block; margin-top: 1px; white-space: nowrap; }
.nums { display: grid; grid-auto-rows: 1fr; min-height: 145px; align-items: center; }
.nums div { display: flex; justify-content: space-between; align-items: center; white-space: nowrap; }
.nums .spin { width: 53px; }
.sopt { height: 124px; margin-top: 7px; }
.opts { display: grid; grid-auto-rows: 1fr; min-height: 101px; margin: 5px 0 0 1px; align-items: center; }
.opts .sub { margin-left: 18px; }
.opts .ck:has(:disabled) { color: #aaa; }
.dlg-actions { display: flex; justify-content: flex-end; gap: 6px; margin: 8px 31px 0 0; }
.dlg-actions .btn { width: 50px; height: 20px; }
.edge { height: 2px; margin-left: 33px; width: 4px; background: #333; }
```
